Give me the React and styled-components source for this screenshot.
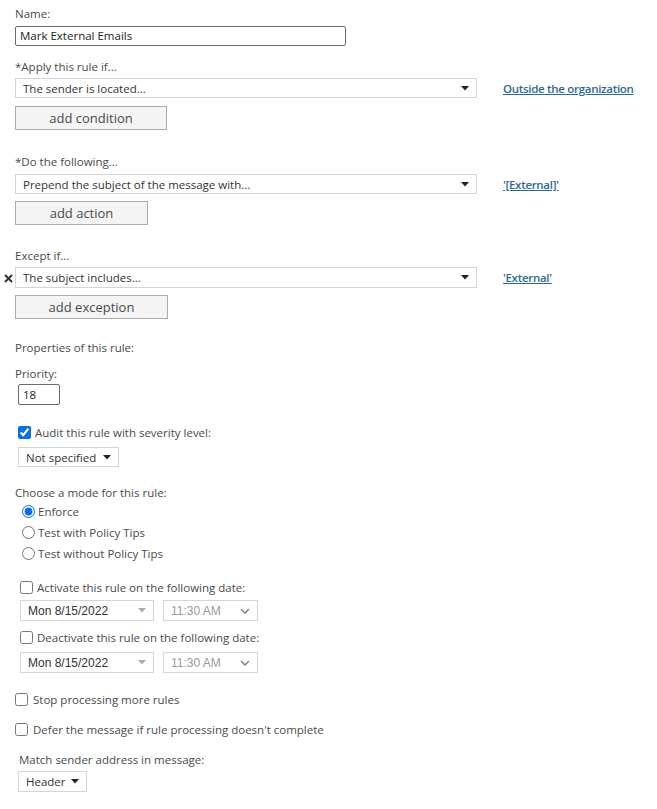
import React from 'react';
import styled, { createGlobalStyle } from 'styled-components';

const GlobalStyle = createGlobalStyle`
  body {
    margin: 0;
    background: #fff;
    font-family: 'Open Sans', 'Noto Sans', sans-serif;
    font-size: 11.5px;
    color: #444;
  }
`;

const Page = styled.div`
  padding: 6px 0 16px 15px;
  display: flex;
  flex-direction: column;
  align-items: flex-start;
`;

const Label = styled.div`
  height: 16px;
  line-height: 16px;
  margin-top: ${(p) => p.$mt || 0}px;
  margin-left: ${(p) => p.$ml || 0}px;
  color: #4a4a4a;
`;

const TextInput = styled.div`
  box-sizing: border-box;
  width: ${(p) => p.$w}px;
  height: ${(p) => p.$h || 20}px;
  margin-top: ${(p) => p.$mt || 0}px;
  margin-left: ${(p) => p.$ml || 0}px;
  border: 1px solid #6b6b6b;
  border-radius: 2px;
  padding: 0 4px;
  line-height: ${(p) => (p.$h || 20) - 2}px;
  color: #222;
`;

const ConditionRow = styled.div`
  display: flex;
  align-items: center;
  margin-top: ${(p) => p.$mt || 0}px;
  position: relative;
`;

const SelectBox = styled.div`
  box-sizing: border-box;
  display: flex;
  align-items: center;
  justify-content: space-between;
  width: ${(p) => p.$w}px;
  height: ${(p) => p.$h || 20}px;
  margin-top: ${(p) => p.$mt || 0}px;
  margin-left: ${(p) => p.$ml || 0}px;
  border: 1px solid ${(p) => (p.$disabled ? '#d6d6d6' : '#cfd6dc')};
  background: #fff;
  padding: 0 7px 0 7px;
  color: ${(p) => (p.$disabled ? '#9a9a9a' : '#333')};
  font-family: ${(p) => (p.$arial ? "'Liberation Sans', Arial, sans-serif" : 'inherit')};
  font-size: ${(p) => (p.$arial ? '12px' : 'inherit')};
  white-space: nowrap;
`;

const RuleLink = styled.a`
  margin-left: 26px;
  color: #2d6a92;
  font-weight: 600;
  letter-spacing: -0.3px;
  text-decoration: underline;
  cursor: pointer;
`;

const RemoveIcon = styled.svg`
  position: absolute;
  left: -11px;
  top: 7px;
`;

const Button = styled.button`
  box-sizing: border-box;
  width: ${(p) => p.$w}px;
  height: 24px;
  margin-top: ${(p) => p.$mt || 0}px;
  border: 1px solid #ababab;
  background: #f4f4f4;
  font-family: inherit;
  font-size: 13px;
  color: #4a4a4a;
  padding: 0;
`;

const CheckRow = styled.label`
  display: flex;
  align-items: center;
  height: ${(p) => p.$h || 16}px;
  margin-top: ${(p) => p.$mt || 0}px;
  margin-left: ${(p) => p.$ml || 0}px;
  color: #4a4a4a;
  gap: ${(p) => p.$gap || 4}px;
`;

const Check = styled.input.attrs({ type: 'checkbox' })`
  width: 13px;
  height: 13px;
  margin: 0;
  accent-color: #0a6fe0;
`;

const Radio = styled.input.attrs({ type: 'radio' })`
  width: 13px;
  height: 13px;
  margin: 0;
  accent-color: #0a6fe0;
`;

const DateRow = styled.div`
  display: flex;
  gap: 9px;
  margin-top: ${(p) => p.$mt || 0}px;
  margin-left: 5px;
`;

const Caret = ({ color = '#222' }) => (
  <svg width="8" height="5" viewBox="0 0 8 5">
    <path d="M0 0h8L4 4.5z" fill={color} />
  </svg>
);

const Chevron = () => (
  <svg width="10" height="6" viewBox="0 0 10 6">
    <path d="M1 1l4 4 4-4" fill="none" stroke="#888" strokeWidth="1.6" />
  </svg>
);

const Select = ({ children, ...rest }) => (
  <SelectBox {...rest}>
    <span>{children}</span>
    <Caret />
  </SelectBox>
);

const DatePair = ({ mt }) => (
  <DateRow $mt={mt}>
    <SelectBox $w={134} $h={21} $arial>
      <span>Mon 8/15/2022</span>
      <Caret color="#aaa" />
    </SelectBox>
    <SelectBox $w={95} $h={21} $arial $disabled>
      <span>11:30 AM</span>
      <Chevron />
    </SelectBox>
  </DateRow>
);

export default function App() {
  return (
    <Page>
      <GlobalStyle />
      <Label>Name:</Label>
      <TextInput $w={331} $mt={4}>Mark External Emails</TextInput>

      <Label $mt={13}>*Apply this rule if...</Label>
      <ConditionRow $mt={3}>
        <Select $w={462}>The sender is located...</Select>
        <RuleLink>Outside the organization</RuleLink>
      </ConditionRow>
      <Button $w={152} $mt={8}>add condition</Button>

      <Label $mt={24}>*Do the following...</Label>
      <ConditionRow $mt={4}>
        <Select $w={462}>Prepend the subject of the message with...</Select>
        <RuleLink>'[External]'</RuleLink>
      </ConditionRow>
      <Button $w={133} $mt={7}>add action</Button>

      <Label $mt={23}>Except if...</Label>
      <ConditionRow $mt={3}>
        <RemoveIcon width="9" height="9" viewBox="0 0 9 9">
          <path d="M1 1l7 7M8 1L1 8" stroke="#333" strokeWidth="2" />
        </RemoveIcon>
        <Select $w={462} $h={21}>The subject includes...</Select>
        <RuleLink>'External'</RuleLink>
      </ConditionRow>
      <Button $w={153} $mt={7}>add exception</Button>

      <Label $mt={21}>Properties of this rule:</Label>
      <Label $mt={10}>Priority:</Label>
      <TextInput $w={42} $h={21} $mt={2} $ml={3}>18</TextInput>

      <CheckRow $mt={19} $ml={3}>
        <Check defaultChecked />
        Audit this rule with severity level:
      </CheckRow>
      <Select $w={101} $mt={7} $ml={3}>Not specified</Select>

      <Label $mt={18}>Choose a mode for this rule:</Label>
      <CheckRow $h={21} $mt={0} $ml={7} $gap={3}>
        <Radio name="mode" defaultChecked />
        Enforce
      </CheckRow>
      <CheckRow $h={21} $ml={7} $gap={3}>
        <Radio name="mode" />
        Test with Policy Tips
      </CheckRow>
      <CheckRow $h={21} $ml={7} $gap={3}>
        <Radio name="mode" />
        Test without Policy Tips
      </CheckRow>

      <CheckRow $mt={15} $ml={5}>
        <Check />
        Activate this rule on the following date:
      </CheckRow>
      <DatePair mt={5} />
      <CheckRow $mt={8} $ml={5}>
        <Check />
        Deactivate this rule on the following date:
      </CheckRow>
      <DatePair mt={7} />

      <CheckRow $mt={18} $gap={5}>
        <Check />
        Stop processing more rules
      </CheckRow>
      <CheckRow $mt={14} $gap={5}>
        <Check />
        Defer the message if rule processing doesn't complete
      </CheckRow>

      <Label $mt={15} $ml={4}>Match sender address in message:</Label>
      <Select $w={69} $h={21} $mt={3} $ml={3}>Header</Select>
    </Page>
  );
}
